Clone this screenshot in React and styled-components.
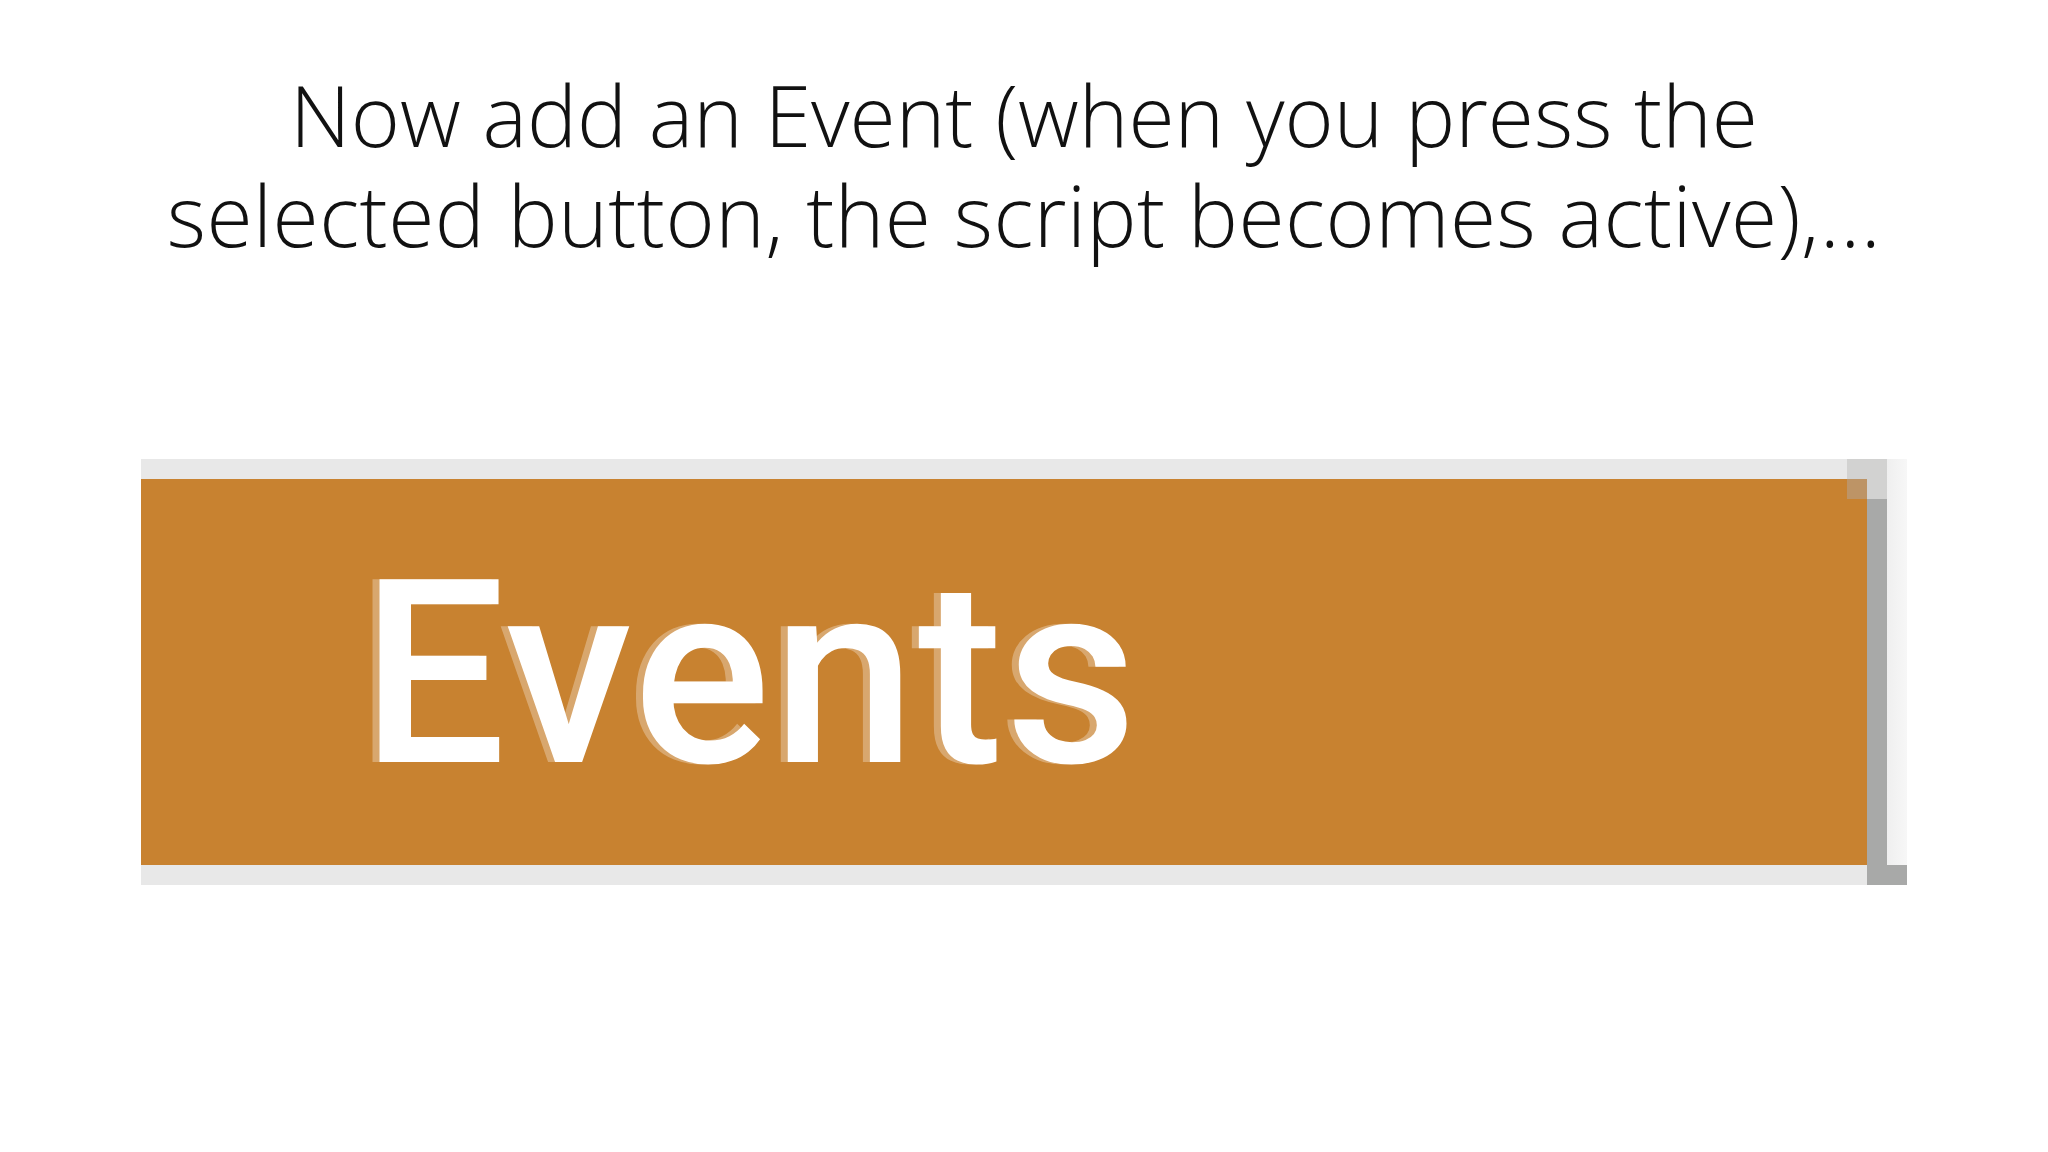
import React from 'react';
import styled, { createGlobalStyle } from 'styled-components';

const GlobalStyle = createGlobalStyle`
  html, body {
    margin: 0;
    padding: 0;
    background: #ffffff;
  }
`;

const Slide = styled.main`
  width: 2048px;
  height: 1152px;
  display: flex;
  flex-direction: column;
  align-items: center;
  background: #ffffff;
  overflow: hidden;
`;

const Title = styled.h1`
  margin: 0;
  padding-top: 65px;
  font-family: 'Open Sans', 'Liberation Sans', sans-serif;
  font-weight: 300;
  font-size: 84px;
  line-height: 100px;
  color: #111111;
  text-align: center;
  white-space: nowrap;
`;

const TitleLine = styled.span`
  display: block;
  height: 100px;
  letter-spacing: ${(p) => p.$tracking || '0px'};
`;

/* the zoomed-in Scratch category button, drawn as chunky pixels */
const BlockFrame = styled.div`
  align-self: flex-start;
  margin: 194px 0 0 141px;
  display: grid;
  grid-template-columns: 1726px 20px 20px;
  grid-template-rows: 20px 20px 366px 20px;
  grid-template-areas:
    'top    corner glow'
    'face   corner glow'
    'face   edge   glow'
    'bottom shade  shade';
`;

const Strip = styled.div`
  grid-area: ${(p) => p.$area};
  background: ${(p) => p.$color};
`;

const TopStrip = styled.div`
  grid-area: top;
  background: linear-gradient(to right, #e8e8e8 calc(100% - 20px), #d2d2d1 calc(100% - 20px));
`;

const Face = styled.div`
  grid-area: face;
  position: relative;
  background: #c88230;
  display: flex;
  align-items: center;
  padding-left: 220px;

  &::after {
    content: '';
    position: absolute;
    top: 0;
    right: 0;
    width: 20px;
    height: 20px;
    background: #bd9466;
  }
`;

const Label = styled.span`
  font-family: Roboto, 'Liberation Sans', sans-serif;
  font-weight: 500;
  font-size: 257px;
  line-height: 1;
  color: #ffffff;
  letter-spacing: 2px;
  margin-top: 4px;
  text-shadow: -7px 0 0 rgba(255, 255, 255, 0.3);
`;

export default function App() {
  return (
    <>
      <GlobalStyle />
      <Slide>
        <Title>
          <TitleLine>Now add an Event (when you press the</TitleLine>
          <TitleLine $tracking="0.5px">selected button, the script becomes active),...</TitleLine>
        </Title>
        <BlockFrame>
          <TopStrip />
          <Strip $area="corner" $color="#d2d2d1" />
          <Strip $area="glow" $color="linear-gradient(to right, #efefef, #f7f7f7)" />
          <Face>
            <Label>Events</Label>
          </Face>
          <Strip $area="edge" $color="#a8a9a8" />
          <Strip $area="bottom" $color="#e8e8e8" />
          <Strip $area="shade" $color="#a8a9a8" />
        </BlockFrame>
      </Slide>
    </>
  );
}
